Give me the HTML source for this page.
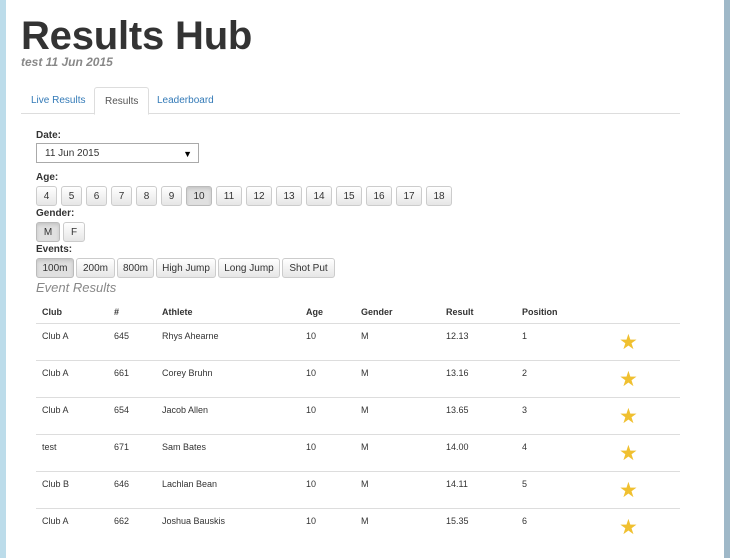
<!DOCTYPE html>
<html><head><style>
body{margin:0;width:730px;height:558px;overflow:hidden;background:#fff;font-family:"Liberation Sans",Arial,sans-serif;color:#333;position:relative}
.l{position:absolute;left:0;top:0;width:6px;height:558px;background:#bcdcea}
.r{position:absolute;right:0;top:0;width:6px;height:558px;background:#9fb8c8}
h1{position:absolute;left:21px;top:14px;margin:0;font-size:40px;font-weight:bold;letter-spacing:-0.2px;color:#333}
.sub{position:absolute;left:21px;top:55px;font-size:12px;font-weight:bold;font-style:italic;color:#888}
.tabs{position:absolute;left:21px;top:87px;width:659px;height:26px;border-bottom:1px solid #ddd}
.tab{position:absolute;top:0;height:26px;line-height:28px;font-size:10px;color:#337ab7;padding:0 10px}
.tab.a{border:1px solid #ddd;border-bottom:1px solid #fff;color:#555;background:#fff;border-radius:3px 3px 0 0;height:26px}
.lbl{position:absolute;left:36px;font-size:10px;font-weight:bold;color:#333}
.sel{position:absolute;left:36px;top:143px;width:163px;height:20px;border:1px solid #aaa;font-size:10px;line-height:20px;box-sizing:border-box;padding-left:8px}
.sel span{position:absolute;right:6px;top:0;font-size:9px;color:#000}
.row{position:absolute;left:36px;display:flex;gap:4px}
.b{height:20px;line-height:20px;font-size:10px;padding:0;width:21px;border:1px solid #ccc;border-radius:3px;background:linear-gradient(#fff,#e6e6e6);box-sizing:border-box;color:#333;text-align:center;flex:none}
.b.d{width:26px}
.b.on{background:#e0e0e0;border-color:#bbb;box-shadow:inset 0 2px 3px rgba(0,0,0,.12)}
.er{position:absolute;left:36px;top:280px;font-size:13px;font-style:italic;color:#888}
table{position:absolute;left:36px;top:301px;width:644px;border-collapse:collapse;font-size:9px}
th{text-align:left;font-weight:bold;height:22px;padding:0 6px;border-bottom:1px solid #ddd}
td{height:37px;vertical-align:top;padding:7px 6px 0;border-bottom:1px solid #ddd;box-sizing:border-box}
tr:last-child td{border-bottom:none}
.st{color:#f0c030;font-size:21px;line-height:20px;padding-top:9px;padding-left:0}
.st span{position:relative;left:-3px}
</style></head><body>
<div class="l"></div><div class="r"></div>
<h1>Results Hub</h1>
<div class="sub">test 11 Jun 2015</div>
<div class="tabs">
<div class="tab" style="left:0">Live Results</div>
<div class="tab a" style="left:73px">Results</div>
<div class="tab" style="left:126px">Leaderboard</div>
</div>
<div class="lbl" style="top:130px">Date:</div>
<div class="sel">11 Jun 2015<span>▼</span></div>
<div class="lbl" style="top:172px">Age:</div>
<div class="row" style="top:186px">
<div class="b">4</div><div class="b">5</div><div class="b">6</div><div class="b">7</div><div class="b">8</div><div class="b">9</div><div class="b d on">10</div><div class="b d">11</div><div class="b d">12</div><div class="b d">13</div><div class="b d">14</div><div class="b d">15</div><div class="b d">16</div><div class="b d">17</div><div class="b d">18</div>
</div>
<div class="lbl" style="top:208px">Gender:</div>
<div class="row" style="top:222px;gap:3px"><div class="b on" style="width:24px">M</div><div class="b" style="width:22px">F</div></div>
<div class="lbl" style="top:244px">Events:</div>
<div class="row" style="top:258px;gap:2px"><div class="b on" style="width:38px">100m</div><div class="b" style="width:39px">200m</div><div class="b" style="width:37px">800m</div><div class="b" style="width:60px">High Jump</div><div class="b" style="width:62px">Long Jump</div><div class="b" style="width:53px">Shot Put</div></div>
<div class="er">Event Results</div>
<table>
<tr><th style="width:60px">Club</th><th style="width:36px">#</th><th style="width:132px">Athlete</th><th style="width:43px">Age</th><th style="width:73px">Gender</th><th style="width:64px">Result</th><th style="width:94px">Position</th><th></th></tr>
<tr><td>Club A</td><td>645</td><td>Rhys Ahearne</td><td>10</td><td>M</td><td>12.13</td><td>1</td><td class="st"><span>★</span></td></tr>
<tr><td>Club A</td><td>661</td><td>Corey Bruhn</td><td>10</td><td>M</td><td>13.16</td><td>2</td><td class="st"><span>★</span></td></tr>
<tr><td>Club A</td><td>654</td><td>Jacob Allen</td><td>10</td><td>M</td><td>13.65</td><td>3</td><td class="st"><span>★</span></td></tr>
<tr><td>test</td><td>671</td><td>Sam Bates</td><td>10</td><td>M</td><td>14.00</td><td>4</td><td class="st"><span>★</span></td></tr>
<tr><td>Club B</td><td>646</td><td>Lachlan Bean</td><td>10</td><td>M</td><td>14.11</td><td>5</td><td class="st"><span>★</span></td></tr>
<tr><td>Club A</td><td>662</td><td>Joshua Bauskis</td><td>10</td><td>M</td><td>15.35</td><td>6</td><td class="st"><span>★</span></td></tr>
</table>
</body></html>
